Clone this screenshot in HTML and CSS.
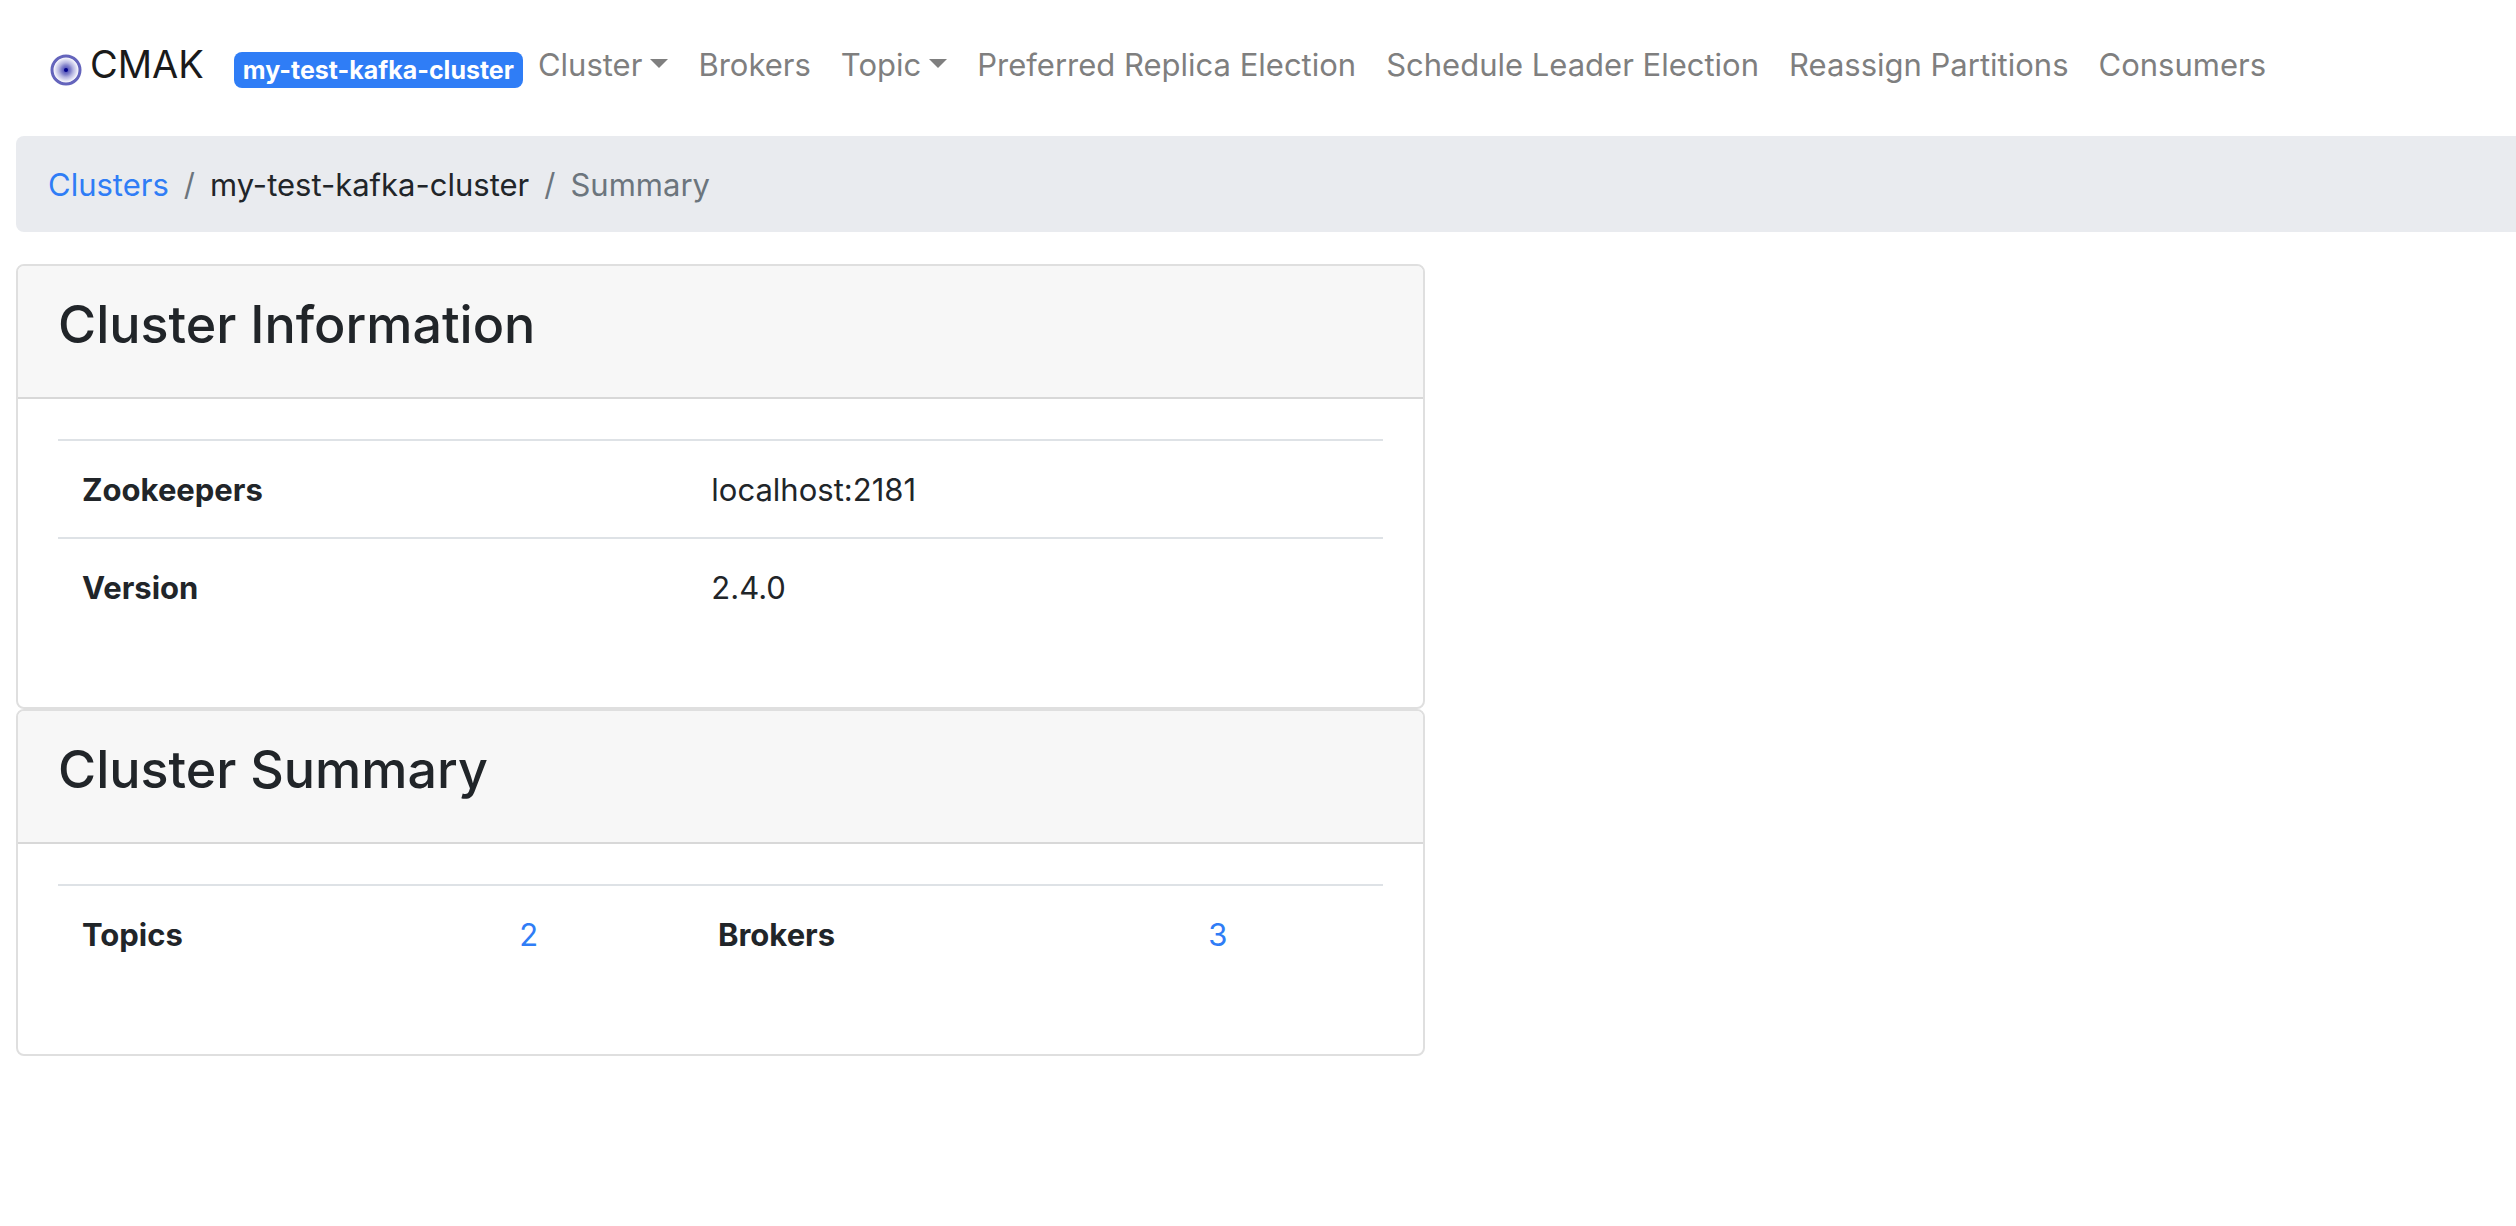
FILE: index.html
```
<!DOCTYPE html>
<html lang="en">
<head>
    <meta charset="UTF-8">
    <meta name="viewport" content="width=device-width, initial-scale=1.0">
    <title>CMAK</title>
    <link rel="stylesheet" href="styles.css">
</head>
<body>

    <nav class="navbar">
        <a class="navbar-brand" href="#">
            <svg class="logo" viewBox="0 0 32 32" aria-hidden="true">
                <defs>
                    <radialGradient id="glow">
                        <stop offset="0" stop-color="#3c3cb0"/>
                        <stop offset="0.4" stop-color="#8484cc"/>
                        <stop offset="0.6" stop-color="#b4b4e0"/>
                        <stop offset="0.85" stop-color="#dcdcf2"/>
                        <stop offset="1" stop-color="#f4f4fb"/>
                    </radialGradient>
                </defs>
                <circle cx="16" cy="16" r="14" fill="#f4f4fb" stroke="#6464bc" stroke-width="3"/>
                <circle cx="16" cy="16" r="12" fill="url(#glow)"/>
                <circle cx="16" cy="16" r="2" fill="#00008b"/>
            </svg>
            CMAK
        </a>
        <span class="badge">my-test-kafka-cluster</span>
        <ul class="navbar-nav">
            <li><button class="nav-link dropdown-toggle" type="button">Cluster</button></li>
            <li><a class="nav-link" href="#">Brokers</a></li>
            <li><button class="nav-link dropdown-toggle" type="button">Topic</button></li>
            <li><a class="nav-link" href="#">Preferred Replica Election</a></li>
            <li><a class="nav-link" href="#">Schedule Leader Election</a></li>
            <li><a class="nav-link" href="#">Reassign Partitions</a></li>
            <li><a class="nav-link" href="#">Consumers</a></li>
        </ul>
    </nav>

    <main class="content">
        <ol class="breadcrumb">
            <li><a href="#">Clusters</a></li>
            <li>my-test-kafka-cluster</li>
            <li class="active">Summary</li>
        </ol>

        <div class="column">
            <section class="card">
                <div class="card-header"><h3>Cluster Information</h3></div>
                <div class="card-body">
                    <table class="table info-table">
                        <tr>
                            <th scope="row">Zookeepers</th>
                            <td>localhost:2181</td>
                        </tr>
                        <tr>
                            <th scope="row">Version</th>
                            <td>2.4.0</td>
                        </tr>
                    </table>
                </div>
            </section>

            <section class="card">
                <div class="card-header"><h3>Cluster Summary</h3></div>
                <div class="card-body">
                    <table class="table summary-table">
                        <colgroup>
                            <col class="col-topics">
                            <col class="col-topics-count">
                            <col class="col-brokers">
                            <col>
                        </colgroup>
                        <tr>
                            <th scope="row">Topics</th>
                            <td><a href="#">2</a></td>
                            <th scope="row">Brokers</th>
                            <td><a href="#">3</a></td>
                        </tr>
                    </table>
                </div>
            </section>
        </div>
    </main>

</body>
</html>
```
FILE: styles.css
```
* {
    box-sizing: border-box;
}

body {
    margin: 0;
    font-family: Inter, "Liberation Sans", sans-serif;
    font-size: 31px;
    line-height: 48px;
    color: #212529;
    background: #fff;
}

a {
    color: #2f7df6;
    text-decoration: none;
}

/* Navbar */
.navbar {
    display: flex;
    align-items: center;
    padding: 24px 48px 32px;
}

.navbar-brand {
    display: flex;
    align-items: center;
    gap: 8px;
    margin-right: 30px;
    font-size: 38px;
    line-height: 60px;
    color: #1a1a1a;
}

.logo {
    width: 32px;
    height: 32px;
    margin: 12px 0 0 2px;
}

.badge {
    margin-top: 12px;
    padding: 6px 9px;
    font-size: 25px;
    font-weight: 700;
    line-height: 24px;
    white-space: nowrap;
    color: #fff;
    background: #2f7df6;
    border-radius: 8px;
}

.navbar-nav {
    display: flex;
    margin: 0;
    padding: 0;
    list-style: none;
}

.nav-link {
    display: block;
    padding: 17px 15px 15px;
    font: inherit;
    white-space: nowrap;
    color: #7f7f7f;
    background: none;
    border: 0;
    cursor: pointer;
}

.dropdown-toggle::after {
    content: "";
    display: inline-block;
    margin-left: 8px;
    vertical-align: 8px;
    border-top: 9px solid;
    border-right: 9px solid transparent;
    border-left: 9px solid transparent;
}

/* Breadcrumb */
.content {
    padding-left: 16px;
}

.breadcrumb {
    display: flex;
    margin: 0 0 32px;
    padding: 25px 32px 23px;
    list-style: none;
    background: #e9ebef;
    border-radius: 8px 0 0 8px;
}

.breadcrumb li + li::before {
    content: "/";
    padding: 0 15px;
    color: #6c757d;
}

.breadcrumb .active {
    color: #6c757d;
}

/* Cards */
.column {
    width: 56vw;
}

.card {
    border: 2px solid #dfdfdf;
    border-radius: 8px;
    overflow: hidden;
}

.card-header {
    padding: 25px 40px 23px;
    background: #f7f7f7;
    border-bottom: 2px solid #d8d8d8;
}

.card-header h3 {
    margin: 0 0 16px;
    font-size: 52px;
    font-weight: 500;
    line-height: 67px;
}

.card-body {
    padding: 40px;
}

.table {
    width: 100%;
    margin-bottom: 32px;
    table-layout: fixed;
    border-collapse: separate;
    border-spacing: 0;
}

.table th,
.table td {
    padding: 25px 24px 23px;
    text-align: left;
    border-top: 2px solid #dee2e6;
}

.info-table th {
    width: 47.5%;
}

.col-topics {
    width: 33%;
}

.col-topics-count {
    width: 15%;
}

.col-brokers {
    width: 37%;
}
```
